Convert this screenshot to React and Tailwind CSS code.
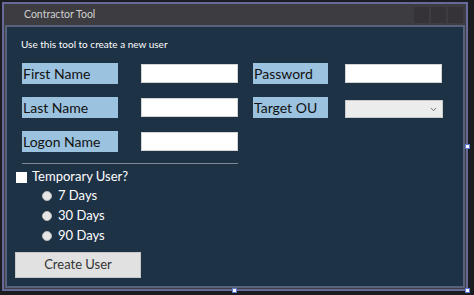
import { ChevronDown } from 'lucide-react'

const font = { fontFamily: 'Lato, "Noto Sans", sans-serif' }

function Label({ text, w }) {
  return (
    <div className={`h-[21px] ${w} bg-[#9bc2de] text-[#111] text-[14px] leading-[21px] pl-px`}>{text}</div>
  )
}

function TextBox() {
  return <div className="h-[19px] w-[97px] bg-white border border-[#d4d4d4]" />
}

function Radio({ text }) {
  return (
    <div className="flex items-center h-[20px]">
      <div className="w-[10px] h-[10px] rounded-full bg-[#e6e6e6] border border-[#bdbdbd]" />
      <span className="ml-[6px] text-[13px] text-white">{text}</span>
    </div>
  )
}

export default function App() {
  return (
    <div className="relative w-[474px] h-[295px] bg-[#1b1c20] pt-[2px] pl-[2px] overflow-hidden" style={font}>
      <div className="w-[466px] h-[289px] border-2 border-[#676a98] flex flex-col">
        {/* Title bar */}
        <div className="h-[21px] shrink-0 bg-[#3d3c41] flex items-center pl-[20px] pr-[3px]">
          <span className="text-[10.5px] text-[#cfcfcf] flex-1">Contractor Tool</span>
          <div className="flex gap-[2px]">
            <div className="w-[15px] h-[16px] bg-[#353338]" />
            <div className="w-[15px] h-[16px] bg-[#353338]" />
            <div className="w-[15px] h-[16px] bg-[#353338]" />
          </div>
        </div>
        {/* Body */}
        <div className="flex-1 bg-[#3d3c41] pl-px pr-[1px] pb-[1px]">
          <div className="h-full border-2 border-[#58637b] bg-[#1e3246] pl-[13px] pt-[9px]">
            <div className="text-[10px] text-white leading-[16px] ml-[1px]">Use this tool to create a new user</div>

            <div className="mt-[11px] ml-[2px] flex items-center">
              <Label text="First Name" w="w-[96px]" />
              <div className="ml-[23px]"><TextBox /></div>
              <div className="ml-[15px]"><Label text="Password" w="w-[75px]" /></div>
              <div className="ml-[17px]"><TextBox /></div>
            </div>

            <div className="mt-[13px] ml-[2px] flex items-center">
              <Label text="Last Name" w="w-[96px]" />
              <div className="ml-[23px]"><TextBox /></div>
              <div className="ml-[15px]"><Label text="Target OU" w="w-[75px]" /></div>
              <div className="ml-[17px] mt-[3px] w-[98px] h-[18px] bg-[#ececec] border border-[#c9c9c9] flex items-center justify-end pr-[4px]">
                <ChevronDown size={9} strokeWidth={2.5} className="text-[#666]" />
              </div>
            </div>

            <div className="mt-[13px] ml-[2px] flex items-center">
              <Label text="Logon Name" w="w-[96px]" />
              <div className="ml-[23px]"><TextBox /></div>
            </div>

            <div className="mt-[11px] ml-[2px] w-[216px] h-px bg-[#7d8899]" />

            <div className="mt-[6px] -ml-[4px] flex items-center h-[14px]">
              <div className="w-[11px] h-[11px] bg-white" />
              <span className="ml-[5px] text-[13px] text-white">Temporary User?</span>
            </div>

            <div className="ml-[22px] mt-[2px] flex flex-col">
              <Radio text="7 Days" />
              <Radio text="30 Days" />
              <Radio text="90 Days" />
            </div>

            <div className="mt-[6px] -ml-[5px] w-[126px] h-[26px] bg-[#e1e1e1] border border-[#c8c8c8] flex items-center justify-center text-[13px] text-[#333]">
              Create User
            </div>
          </div>
        </div>
      </div>

      {/* designer selection handles */}
      <div className="absolute left-[465px] top-[144px] w-[5px] h-[5px] bg-white border border-[#5b7bd0]" />
      <div className="absolute left-[232px] top-[288px] w-[5px] h-[5px] bg-white border border-[#5b7bd0]" />
      <div className="absolute left-[465px] top-[288px] w-[5px] h-[5px] bg-white border border-[#5b7bd0]" />
    </div>
  )
}
